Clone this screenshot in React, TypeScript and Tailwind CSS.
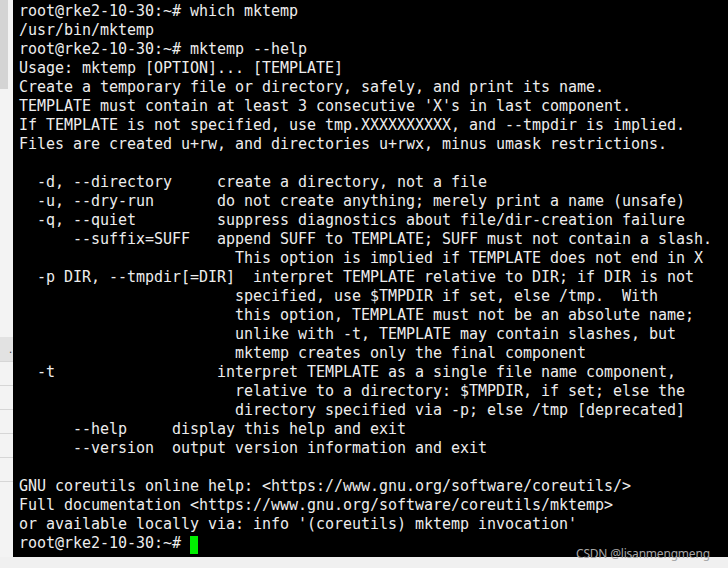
import React from 'react';

const LINES = [
  'root@rke2-10-30:~# which mktemp',
  '/usr/bin/mktemp',
  'root@rke2-10-30:~# mktemp --help',
  'Usage: mktemp [OPTION]... [TEMPLATE]',
  'Create a temporary file or directory, safely, and print its name.',
  "TEMPLATE must contain at least 3 consecutive 'X's in last component.",
  'If TEMPLATE is not specified, use tmp.XXXXXXXXXX, and --tmpdir is implied.',
  'Files are created u+rw, and directories u+rwx, minus umask restrictions.',
  '',
  '  -d, --directory     create a directory, not a file',
  '  -u, --dry-run       do not create anything; merely print a name (unsafe)',
  '  -q, --quiet         suppress diagnostics about file/dir-creation failure',
  '      --suffix=SUFF   append SUFF to TEMPLATE; SUFF must not contain a slash.',
  '                        This option is implied if TEMPLATE does not end in X',
  '  -p DIR, --tmpdir[=DIR]  interpret TEMPLATE relative to DIR; if DIR is not',
  '                        specified, use $TMPDIR if set, else /tmp.  With',
  '                        this option, TEMPLATE must not be an absolute name;',
  '                        unlike with -t, TEMPLATE may contain slashes, but',
  '                        mktemp creates only the final component',
  '  -t                  interpret TEMPLATE as a single file name component,',
  '                        relative to a directory: $TMPDIR, if set; else the',
  '                        directory specified via -p; else /tmp [deprecated]',
  '      --help     display this help and exit',
  '      --version  output version information and exit',
  '',
  'GNU coreutils online help: <https://www.gnu.org/software/coreutils/>',
  'Full documentation <https://www.gnu.org/software/coreutils/mktemp>',
  "or available locally via: info '(coreutils) mktemp invocation'",
];

function SidePanel() {
  return (
    <div className="flex w-[13px] shrink-0 flex-col bg-[#f3f3f3]">
      <div className="h-[89px] w-[8px] bg-[#d4d4d4]" />
      <div className="h-[248px]" />
      <div className="flex h-[24px] items-center justify-end bg-[#e2e2e2] pr-[1px] text-[10px] leading-none text-[#333]">
        .
      </div>
      {[0, 1, 2, 3, 4].map((i) => (
        <div key={i} className="h-[24px] border-t border-[#d6d6d6]" />
      ))}
      <div className="border-t border-[#d6d6d6]" />
    </div>
  );
}

export default function App() {
  return (
    <div className="relative flex h-[568px] w-[728px] flex-col overflow-hidden bg-[#f0f0f0]">
      <div className="flex h-[557px]">
        <SidePanel />
        <div
          className="flex-1 bg-black pl-[6px] pt-[2px] text-[15px] leading-[19px] tracking-[-0.03px] text-[#ededed] whitespace-pre"
          style={{ fontFamily: '"DejaVu Sans Mono", "Liberation Mono", monospace' }}
        >
          {LINES.map((line, i) => (
            <div key={i} className="h-[19px]">
              {line}
            </div>
          ))}
          <div className="flex h-[19px] items-center">
            <span>root@rke2-10-30:~# </span>
            <span className="mt-[3px] inline-block h-[18px] w-[8px] bg-[#00f000]" />
          </div>
        </div>
      </div>
      <div className="h-[11px] bg-[#f0f0f0]" />
      <span
        className="absolute left-[576px] top-[546px] text-[12px] leading-[16px] tracking-[-0.2px] text-[#a8a8a8]"
        style={{ fontFamily: '"Noto Sans", "Liberation Sans", sans-serif' }}
      >
        CSDN @lisanmengmeng
      </span>
    </div>
  );
}
